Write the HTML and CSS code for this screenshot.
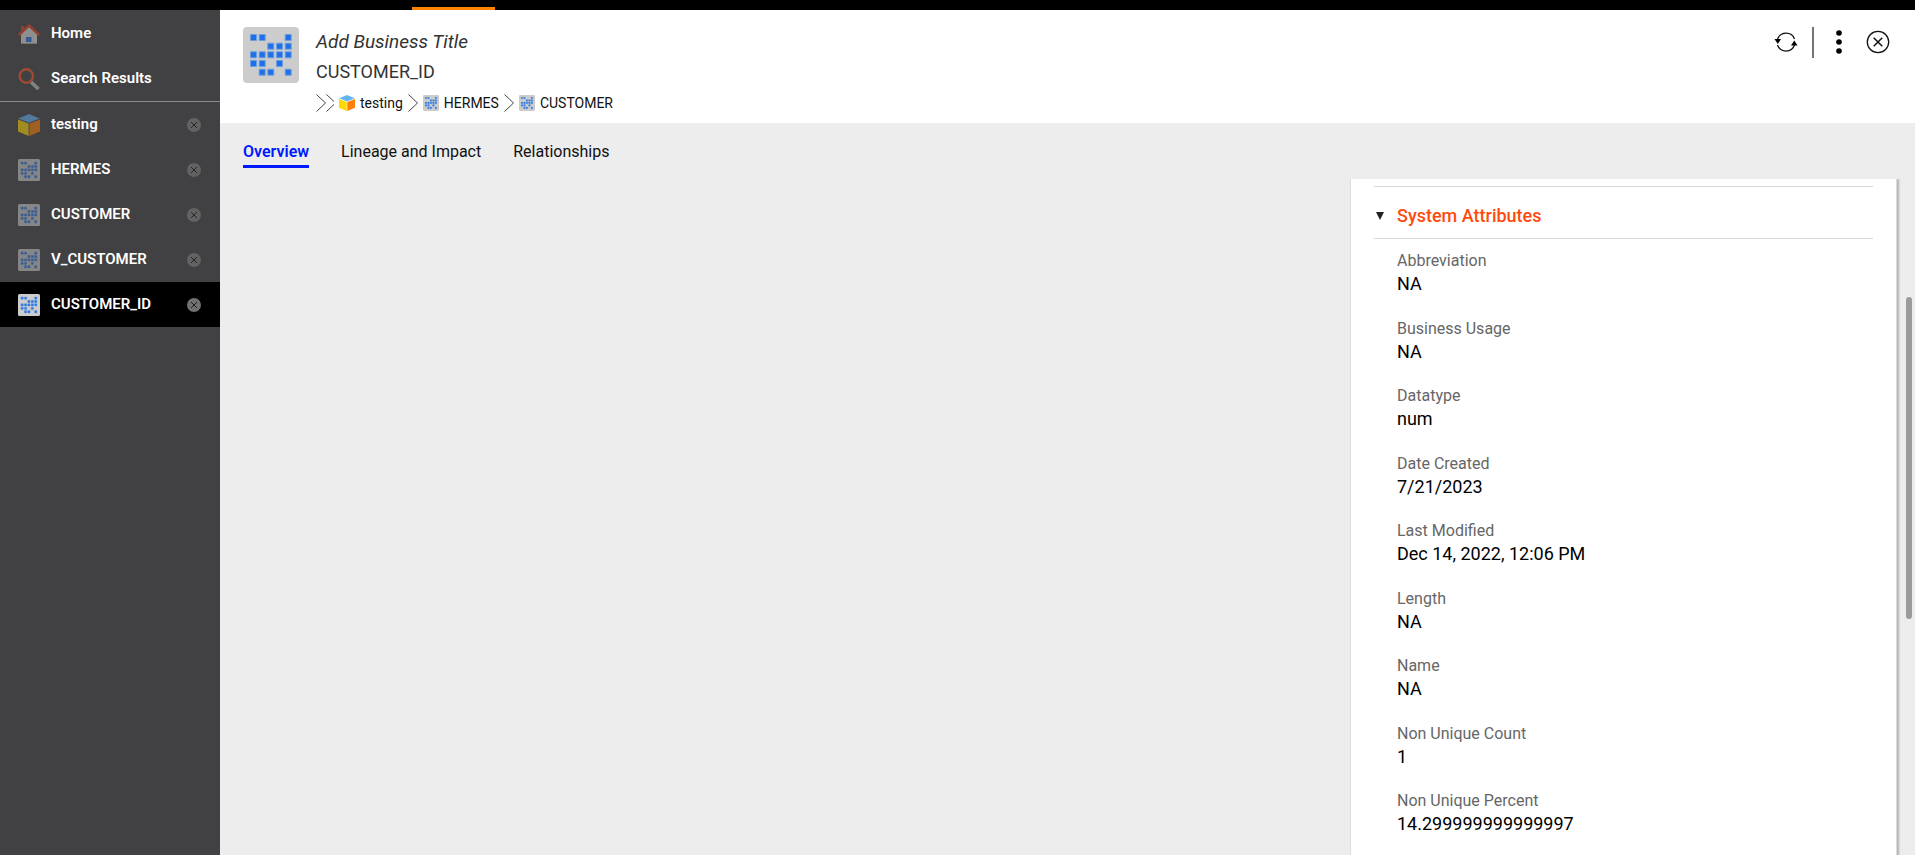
FILE: index.html
```html
<!DOCTYPE html>
<html lang="en">
<head>
<meta charset="utf-8">
<title>CUSTOMER_ID</title>
<link rel="stylesheet" href="styles.css">
</head>
<body>
<svg class="sprite" aria-hidden="true">
  <symbol id="column" viewBox="0 0 56 56">
    <rect width="56" height="56" rx="4" fill="#cccccc"/>
    <g fill="#1f70e8" stroke="#6c9ede" stroke-width="1">
      <path d="M7.5 7.5h6v6h-6zM16.2 7.5h6v6h-6zM42.2 7.5h6v6h-6z"/>
      <path d="M24.8 16.2h6v6h-6zM33.5 16.2h6v6h-6zM42.2 16.2h6v6h-6z"/>
      <path d="M7.5 24.8h6v6h-6zM16.2 24.8h6v6h-6zM24.8 24.8h6v6h-6zM33.5 24.8h6v6h-6zM42.2 24.8h6v6h-6z"/>
      <path d="M7.5 33.5h6v6h-6zM16.2 33.5h6v6h-6zM33.5 33.5h6v6h-6z"/>
      <path d="M16.2 42.2h6v6h-6zM24.8 42.2h6v6h-6zM42.2 42.2h6v6h-6z"/>
    </g>
  </symbol>
  <symbol id="cube" viewBox="0 0 22 22">
    <path d="M11 0L21.6 4.6 11 8.8.4 4.6z" fill="#64b5f6"/>
    <path d="M0 5.4L10.6 9.5V22L0 17.6z" fill="#ffd800"/>
    <path d="M22 5.4L11.4 9.5V22L22 17.6z" fill="#ff8008"/>
  </symbol>
  <symbol id="chevron" viewBox="0 0 10 18">
    <path d="M.5.5L9.500 9 .5 17.500" fill="none" stroke="#444" stroke-width="1"/>
  </symbol>
  <symbol id="remove" viewBox="0 0 14 14">
    <circle cx="7" cy="7" r="7" fill="currentColor"/>
    <path d="M4 4l6 6M10 4l-6 6" stroke="#1c1c1c" stroke-width="1"/>
  </symbol>
</svg>

<header class="topbar"><span class="topbar-active"></span></header>

<div class="app">
  <nav class="sidebar" aria-label="Open items">
    <ul class="side-list side-fixed">
      <li class="side-item">
        <svg class="side-icon" viewBox="0 0 22 22" aria-hidden="true">
          <path d="M3 3h3.200v7H3z" fill="#d8401f"/>
          <path d="M3 11L11 3.500 19 11v10H3z" fill="#dedede"/>
          <path d="M3 20h16v1H3z" fill="#aaa"/>
          <path d="M.7 12L11 2.500 21.300 12" fill="none" stroke="#e0401f" stroke-width="2.600"/>
          <path d="M8 14h5.500v5H8z" fill="#2f74df"/>
        </svg>
        <a class="side-link" href="#home">Home</a>
      </li>
      <li class="side-item">
        <svg class="side-icon" viewBox="0 0 22 22" aria-hidden="true">
          <path d="M13 14l7.500 7" stroke="#c4c4c4" stroke-width="3.600"/>
          <circle cx="8.300" cy="8" r="6.700" fill="none" stroke="#ff5722" stroke-width="2.400"/>
        </svg>
        <a class="side-link" href="#search">Search Results</a>
      </li>
    </ul>
    <ul class="side-list">
      <li class="side-item">
        <svg class="side-icon" aria-hidden="true"><use href="#cube"/></svg>
        <a class="side-link" href="#testing">testing</a>
        <button class="remove" type="button" aria-label="Close testing"><svg><use href="#remove"/></svg></button>
      </li>
      <li class="side-item">
        <svg class="side-icon" aria-hidden="true"><use href="#column"/></svg>
        <a class="side-link" href="#hermes">HERMES</a>
        <button class="remove" type="button" aria-label="Close HERMES"><svg><use href="#remove"/></svg></button>
      </li>
      <li class="side-item">
        <svg class="side-icon" aria-hidden="true"><use href="#column"/></svg>
        <a class="side-link" href="#customer">CUSTOMER</a>
        <button class="remove" type="button" aria-label="Close CUSTOMER"><svg><use href="#remove"/></svg></button>
      </li>
      <li class="side-item">
        <svg class="side-icon" aria-hidden="true"><use href="#column"/></svg>
        <a class="side-link" href="#v-customer">V_CUSTOMER</a>
        <button class="remove" type="button" aria-label="Close V_CUSTOMER"><svg><use href="#remove"/></svg></button>
      </li>
      <li class="side-item side-active">
        <svg class="side-icon" aria-hidden="true"><use href="#column"/></svg>
        <a class="side-link" href="#customer-id" aria-current="page">CUSTOMER_ID</a>
        <button class="remove" type="button" aria-label="Close CUSTOMER_ID"><svg><use href="#remove"/></svg></button>
      </li>
    </ul>
  </nav>

  <main class="main">
    <section class="object-header">
      <svg class="object-icon" aria-hidden="true"><use href="#column"/></svg>
      <div class="object-text">
        <p class="object-title">Add Business Title</p>
        <h1 class="object-name">CUSTOMER_ID</h1>
        <nav class="crumbs" aria-label="Breadcrumb">
          <svg class="chevron-start" viewBox="0 0 18 18" aria-hidden="true"><path d="M.5.5L9.500 9 .5 17.500M10.500.5L19.500 9 10.500 17.500" fill="none" stroke="#444"/></svg>
          <a class="crumb" href="#testing"><svg class="crumb-icon"><use href="#cube"/></svg>testing</a>
          <svg class="chevron"><use href="#chevron"/></svg>
          <a class="crumb" href="#hermes"><svg class="crumb-icon"><use href="#column"/></svg>HERMES</a>
          <svg class="chevron"><use href="#chevron"/></svg>
          <a class="crumb" href="#customer"><svg class="crumb-icon"><use href="#column"/></svg>CUSTOMER</a>
        </nav>
      </div>
      <div class="actions">
        <button class="action" type="button" aria-label="Refresh">
          <svg viewBox="0 0 24 24">
            <path d="M3.500 9.500A9 9 0 0 1 20.500 9M20.500 15A9 9 0 0 1 3.500 15" fill="none" stroke="#111" stroke-width="1.300"/>
            <path d="M.5 9h6.500L3.800 14zM17 15.500h6.500L20.300 10.500z" fill="#000"/>
          </svg>
        </button>
        <span class="action-divider"></span>
        <button class="action" type="button" aria-label="More">
          <svg viewBox="0 0 24 24"><circle cx="11" cy="3" r="2.800"/><circle cx="11" cy="12" r="2.800"/><circle cx="11" cy="21" r="2.800"/></svg>
        </button>
        <button class="action" type="button" aria-label="Close">
          <svg viewBox="0 0 24 24" fill="none" stroke="#111"><circle cx="12" cy="12" r="10.700" stroke-width="1.300"/><path d="M7.700 7.700l8.600 8.600M16.300 7.700l-8.600 8.600" stroke-width="1.500"/></svg>
        </button>
      </div>
    </section>

    <nav class="tabs" aria-label="Views">
      <a class="tab tab-active" href="#overview">Overview</a>
      <a class="tab" href="#lineage">Lineage and Impact</a>
      <a class="tab" href="#relationships">Relationships</a>
    </nav>

    <div class="content">
      <section class="panel">
        <h2 class="panel-heading">
          <button class="panel-toggle" type="button" aria-expanded="true"><svg class="caret" viewBox="0 0 8 8" aria-hidden="true"><path d="M0 0h8L4 8z" fill="#222"/></svg>System Attributes</button>
        </h2>
        <dl class="fields">
          <div class="field"><dt>Abbreviation</dt><dd>NA</dd></div>
          <div class="field"><dt>Business Usage</dt><dd>NA</dd></div>
          <div class="field"><dt>Datatype</dt><dd>num</dd></div>
          <div class="field"><dt>Date Created</dt><dd>7/21/2023</dd></div>
          <div class="field"><dt>Last Modified</dt><dd>Dec 14, 2022, 12:06 PM</dd></div>
          <div class="field"><dt>Length</dt><dd>NA</dd></div>
          <div class="field"><dt>Name</dt><dd>NA</dd></div>
          <div class="field"><dt>Non Unique Count</dt><dd>1</dd></div>
          <div class="field"><dt>Non Unique Percent</dt><dd>14.299999999999997</dd></div>
        </dl>
      </section>
      <span class="scroll-thumb"></span>
    </div>
  </main>
</div>
</body>
</html>
```

FILE: styles.css
```css
* {
  box-sizing: border-box;
}

body {
  margin: 0;
  height: 100vh;
  display: flex;
  flex-direction: column;
  overflow: hidden;
  background: #ededed;
  color: #111;
  font-family: Roboto, "Liberation Sans", sans-serif;
  font-size: 16px;
}

a {
  color: inherit;
  text-decoration: none;
}

button {
  padding: 0;
  border: 0;
  background: none;
  font: inherit;
  color: inherit;
  cursor: pointer;
}

svg {
  display: block;
  flex: none;
}

.sprite {
  position: absolute;
  width: 0;
  height: 0;
}

.topbar {
  flex: none;
  display: flex;
  align-items: flex-end;
  height: 10px;
  padding-left: 412px;
  background: #000;
}

.topbar-active {
  width: 83px;
  height: 3px;
  background: #ff8300;
}

.app {
  flex: 1;
  min-height: 0;
  display: flex;
}

/* Sidebar */

.sidebar {
  flex: none;
  width: 220px;
  background: #414042;
  color: #fff;
}

.side-list {
  margin: 0;
  padding: 0;
  list-style: none;
}

.side-fixed {
  padding-top: 1px;
  border-bottom: 1px solid #8a8a8a;
}

.side-item {
  display: flex;
  align-items: center;
  gap: 11px;
  height: 45px;
  padding: 0 19px 0 18px;
}

.side-active {
  background: #000;
}

.side-icon {
  width: 22px;
  height: 22px;
  opacity: 0.5;
}

.side-active .side-icon {
  opacity: 1;
}

.side-link {
  flex: 1;
  padding-bottom: 2px;
  font-size: 15px;
  font-weight: 600;
  line-height: 18px;
}

.remove {
  color: #717172;
}

.remove svg {
  width: 14px;
  height: 14px;
}

.side-item:not(.side-active) .remove {
  opacity: 0.7;
}

/* Object header */

.main {
  flex: 1;
  min-width: 0;
  display: flex;
  flex-direction: column;
}

.object-header {
  flex: none;
  display: flex;
  align-items: flex-start;
  padding: 17px 25px 11px 23px;
  background: #fff;
}

.object-icon {
  width: 56px;
  height: 56px;
}

.object-text {
  flex: 1;
  margin-left: 17px;
}

.object-title,
.object-name {
  margin: 0;
  font-size: 18px;
  font-weight: 400;
  line-height: 30px;
  color: #333;
}

.object-title {
  font-size: 19px;
  font-style: italic;
}

.crumbs {
  display: flex;
  align-items: center;
  gap: 5px;
  height: 18px;
  margin-top: 7px;
  font-size: 14px;
  line-height: 18px;
}

.crumb {
  display: flex;
  align-items: center;
  gap: 5px;
}

.crumb-icon {
  width: 16px;
  height: 16px;
}

.chevron {
  width: 10px;
  height: 18px;
}

.chevron-start {
  width: 18px;
  height: 18px;
}

.actions {
  display: flex;
  align-items: center;
  gap: 14px;
}

.action {
  padding-bottom: 2px;
}

.action svg {
  width: 24px;
  height: 24px;
}

.action-divider {
  width: 2px;
  height: 31px;
  background: #757575;
}

/* Tabs */

.tabs {
  flex: none;
  display: flex;
  align-items: flex-start;
  gap: 32px;
  height: 56px;
  padding: 19px 23px 0;
}

.tab {
  padding-bottom: 3px;
  border-bottom: 3px solid transparent;
  line-height: 20px;
}

.tab-active {
  border-color: #0019ff;
  color: #0019ff;
  font-weight: 600;
}

/* Content */

.content {
  position: relative;
  flex: 1;
  min-height: 0;
  display: grid;
  grid-template-columns: 2fr 1fr;
  column-gap: 13px;
  padding: 0 18px 0 23px;
  overflow: hidden;
}

.panel {
  grid-column: 2;
  padding: 7px 23px 0;
  border: 1px solid #ddd;
  border-width: 0 1px;
  background: #fff;
  box-shadow: 2px 0 2px rgba(0, 0, 0, 0.25);
  clip-path: inset(0 -6px 0 0);
}

.panel-heading {
  margin: 0;
  border: 1px solid #d9d9d9;
  border-width: 1px 0;
  font-size: 18px;
  font-weight: 500;
  color: #ff4a0d;
}

.panel-toggle {
  display: flex;
  align-items: center;
  gap: 13px;
  height: 51px;
  padding: 6px 0 0 2px;
}

.caret {
  width: 8px;
  height: 8px;
}

.fields {
  margin: 12px 0 0 23px;
  line-height: 1.25;
}

.field {
  margin-bottom: 23px;
}

.field dt {
  color: #666;
}

.field dd {
  margin: 2px 0 0;
  font-size: 18px;
  color: #000;
}

.scroll-thumb {
  position: absolute;
  top: 17.5%;
  right: 3px;
  width: 6px;
  height: 47.6%;
  border-radius: 3px;
  background: #9b9b9b;
}
```
